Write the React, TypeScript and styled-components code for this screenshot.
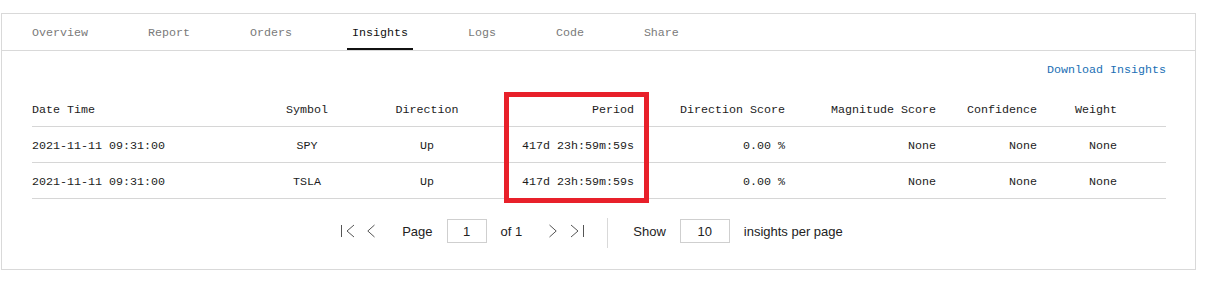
import React from "react";
import styled, { createGlobalStyle } from "styled-components";

const Global = createGlobalStyle`
  html, body { margin: 0; padding: 0; background: #fff; }
  body { font-family: "Liberation Mono", monospace; }
`;

const Page = styled.div`
  padding: 13px 9px 0 1px;
`;

const Card = styled.div`
  border: 1px solid #d9d9d9;
  background: #fff;
  padding-bottom: 24px;
`;

const TabBar = styled.div`
  display: flex;
  height: 36px;
  border-bottom: 1px solid #d9d9d9;
  padding-left: 25px;
`;

const Tab = styled.div<{ $active?: boolean }>`
  display: flex;
  align-items: center;
  box-sizing: border-box;
  height: 36px;
  padding: 3px 5px 0;
  margin-right: 50px;
  font-family: "Liberation Mono", monospace;
  font-size: 11.67px;
  color: ${(p) => (p.$active ? "#111" : "#7a7a7a")};
  border-bottom: 2px solid ${(p) => (p.$active ? "#111" : "transparent")};
`;

const Body = styled.div`
  padding: 10px 29px 0 30px;
`;

const LinkRow = styled.div`
  display: flex;
  justify-content: flex-end;
  height: 18px;
  align-items: center;
  margin-bottom: 12px;
`;

const Link = styled.a`
  font-family: "Liberation Mono", monospace;
  font-size: 11.67px;
  color: #1a6fb5;
  text-decoration: none;
  cursor: pointer;
`;

const Table = styled.div`
  position: relative;
`;

const Row = styled.div`
  display: grid;
  grid-template-columns: 215px 120px 120px 157px 151px 151px 101px 80px 1fr;
  height: 36px;
  box-sizing: border-box;
  border-bottom: 1px solid #d6d6d6;
  align-items: center;
`;

const Cell = styled.div<{ $align: "left" | "center" | "right" }>`
  font-family: "Liberation Mono", monospace;
  font-size: 11.67px;
  color: #1c1c1c;
  text-align: ${(p) => p.$align};
  padding-right: ${(p) => (p.$align === "right" ? "10px" : "0")};
  padding-top: 2px;
  white-space: nowrap;
`;

const Highlight = styled.div`
  position: absolute;
  left: 472px;
  top: 1px;
  width: 145px;
  height: 111px;
  box-sizing: border-box;
  border: 5px solid #e8202a;
  pointer-events: none;
`;

const Pager = styled.div`
  display: flex;
  justify-content: center;
  align-items: center;
  height: 28px;
  margin-top: 18px;
  padding-right: 14px;
  font-family: "Liberation Sans", Arial, sans-serif;
  font-size: 13px;
  color: #222;
`;

const Group = styled.div<{ $gap: number; $ml?: number }>`
  display: flex;
  align-items: center;
  gap: ${(p) => p.$gap}px;
  margin-left: ${(p) => p.$ml ?? 0}px;
`;

const IconBtn = styled.button`
  display: flex;
  align-items: center;
  justify-content: center;
  background: none;
  border: none;
  padding: 0;
  cursor: pointer;
`;

const Input = styled.div<{ $w: number }>`
  width: ${(p) => p.$w}px;
  height: 24px;
  box-sizing: border-box;
  border: 1px solid #cfcfcf;
  display: flex;
  align-items: center;
  justify-content: center;
  font-family: "Liberation Sans", Arial, sans-serif;
  font-size: 13px;
  color: #222;
`;

const Divider = styled.div`
  width: 1px;
  height: 30px;
  background: #d9d9d9;
  margin: 4px 25px 0 23px;
`;

const Label = styled.span``;

const stroke = "#555";

const FirstIcon = () => (
  <svg width="14" height="14" viewBox="0 0 14 14">
    <path d="M0.5 1 V13" stroke={stroke} strokeWidth="1" fill="none" />
    <path d="M13 1 L6 7 L13 13" stroke={stroke} strokeWidth="1" fill="none" />
  </svg>
);
const PrevIcon = () => (
  <svg width="8" height="14" viewBox="0 0 8 14">
    <path d="M7.5 1 L0.8 7 L7.5 13" stroke={stroke} strokeWidth="1" fill="none" />
  </svg>
);
const NextIcon = () => (
  <svg width="8" height="14" viewBox="0 0 8 14">
    <path d="M0.5 1 L7.2 7 L0.5 13" stroke={stroke} strokeWidth="1" fill="none" />
  </svg>
);
const LastIcon = () => (
  <svg width="14" height="14" viewBox="0 0 14 14">
    <path d="M1 1 L8 7 L1 13" stroke={stroke} strokeWidth="1" fill="none" />
    <path d="M13.5 1 V13" stroke={stroke} strokeWidth="1" fill="none" />
  </svg>
);

const tabs = ["Overview", "Report", "Orders", "Insights", "Logs", "Code", "Share"];

type Align = "left" | "center" | "right";
const columns: { label: string; align: Align }[] = [
  { label: "Date Time", align: "left" },
  { label: "Symbol", align: "center" },
  { label: "Direction", align: "center" },
  { label: "Period", align: "right" },
  { label: "Direction Score", align: "right" },
  { label: "Magnitude Score", align: "right" },
  { label: "Confidence", align: "right" },
  { label: "Weight", align: "right" },
];

const rows = [
  ["2021-11-11 09:31:00", "SPY", "Up", "417d 23h:59m:59s", "0.00 %", "None", "None", "None"],
  ["2021-11-11 09:31:00", "TSLA", "Up", "417d 23h:59m:59s", "0.00 %", "None", "None", "None"],
];

export default function App() {
  return (
    <>
      <Global />
      <Page>
        <Card>
          <TabBar>
            {tabs.map((t) => (
              <Tab key={t} $active={t === "Insights"}>
                {t}
              </Tab>
            ))}
          </TabBar>
          <Body>
            <LinkRow>
              <Link>Download Insights</Link>
            </LinkRow>
            <Table>
              <Row>
                {columns.map((c) => (
                  <Cell key={c.label} $align={c.align}>
                    {c.label}
                  </Cell>
                ))}
                <div />
              </Row>
              {rows.map((r, i) => (
                <Row key={i}>
                  {r.map((v, j) => (
                    <Cell key={j} $align={columns[j].align}>
                      {v}
                    </Cell>
                  ))}
                  <div />
                </Row>
              ))}
              <Highlight />
            </Table>
            <Pager>
              <Group $gap={12}>
                <IconBtn aria-label="First page">
                  <FirstIcon />
                </IconBtn>
                <IconBtn aria-label="Previous page">
                  <PrevIcon />
                </IconBtn>
              </Group>
              <Group $gap={14} $ml={27}>
                <Label>Page</Label>
                <Input $w={40}>1</Input>
                <Label>of 1</Label>
              </Group>
              <Group $gap={13} $ml={27}>
                <IconBtn aria-label="Next page">
                  <NextIcon />
                </IconBtn>
                <IconBtn aria-label="Last page">
                  <LastIcon />
                </IconBtn>
              </Group>
              <Divider />
              <Group $gap={14}>
                <Label>Show</Label>
                <Input $w={50}>10</Input>
                <Label>insights per page</Label>
              </Group>
            </Pager>
          </Body>
        </Card>
      </Page>
    </>
  );
}
